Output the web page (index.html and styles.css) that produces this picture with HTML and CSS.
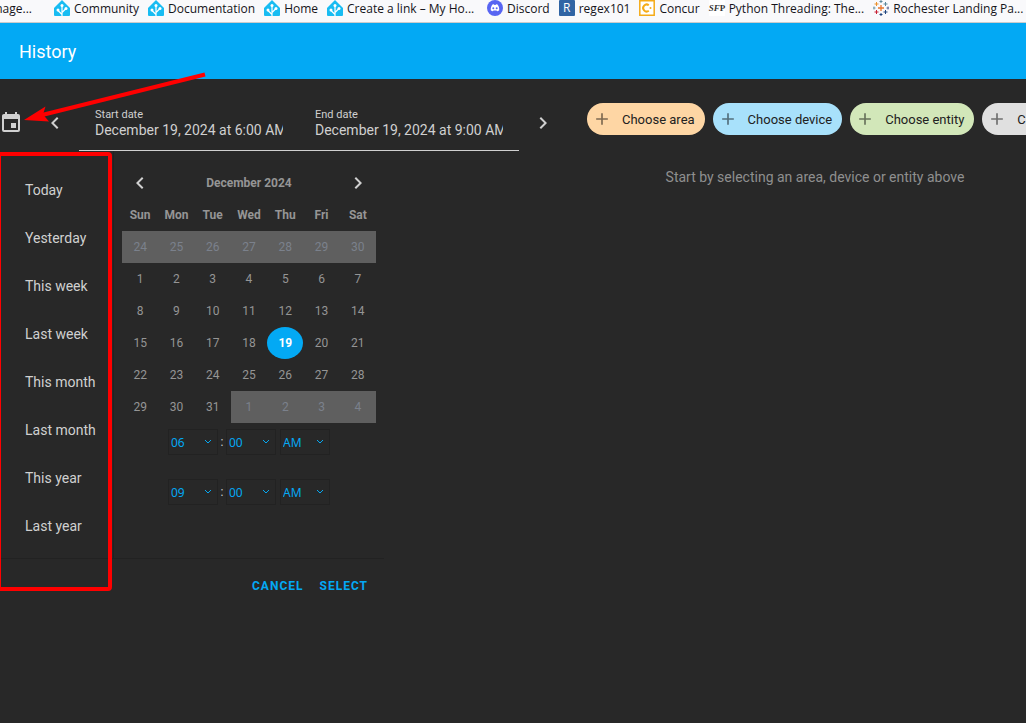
FILE: index.html
```
<!DOCTYPE html>
<html lang="en">
<head>
    <meta charset="UTF-8">
    <meta name="viewport" content="width=device-width, initial-scale=1.0">
    <title>History</title>
    <link rel="stylesheet" href="styles.css">
</head>
<body>
    <!-- shared icons -->
    <svg class="defs" aria-hidden="true">
        <symbol id="ha" viewBox="0 0 16 16">
            <path fill="#18bcf2" d="M8 0 16 8v7a1 1 0 0 1-1 1H1a1 1 0 0 1-1-1V8z"/>
            <path fill="none" stroke="#fff" stroke-width="1.2" d="M8 16V6M8 14.500 4 10.500M8 12.500l4-4"/>
            <circle cx="8" cy="5.500" r="1.500" fill="#fff"/>
            <circle cx="4" cy="10" r="1.500" fill="#fff"/>
            <circle cx="12" cy="8.500" r="1.500" fill="#fff"/>
        </symbol>
        <symbol id="left" viewBox="0 0 24 24"><path d="M15.410 16.580 10.830 12l4.580-4.590L14 6l-6 6 6 6z"/></symbol>
        <symbol id="right" viewBox="0 0 24 24"><path d="M8.590 16.580 13.170 12 8.590 7.410 10 6l6 6-6 6z"/></symbol>
        <symbol id="plus" viewBox="0 0 24 24"><path d="M19 13h-6v6h-2v-6H5v-2h6V5h2v6h6z"/></symbol>
    </svg>

    <nav class="bookmarks">
        <a href="#" class="cut">nage...</a>
        <a href="#"><svg><use href="#ha"/></svg>Community</a>
        <a href="#"><svg><use href="#ha"/></svg>Documentation</a>
        <a href="#"><svg><use href="#ha"/></svg>Home</a>
        <a href="#" class="wide"><svg><use href="#ha"/></svg>Create a link – My Ho...</a>
        <a href="#"><svg viewBox="0 0 16 16"><circle cx="8" cy="8" r="8" fill="#5865f2"/><path fill="#fff" d="M5.500 4.500 7 4.200l.4.700h1.200l.4-.7 1.500.3c1.200 1.600 1.900 3.300 1.700 5.700-.7.600-1.400.9-2.100 1.100l-.6-.9H6.500l-.6.900c-.8-.2-1.500-.6-2.100-1.100-.2-2.200.4-4 1.700-5.700z"/><circle cx="6.300" cy="8.200" r="1" fill="#5865f2"/><circle cx="9.700" cy="8.200" r="1" fill="#5865f2"/></svg>Discord</a>
        <a href="#"><span class="fav regex">R</span>regex101</a>
        <a href="#"><svg viewBox="0 0 16 16"><path fill="#fff" stroke="#f5ab18" stroke-width="1.500" d="M.8.800h14.400v14.400H.8z"/><path fill="none" stroke="#f5ab18" stroke-width="2" d="M9.800 5.200A3.500 3.500 0 1 0 9.800 10.800"/><circle cx="11.500" cy="8" r="1" fill="#f5ab18"/></svg>Concur</a>
        <a href="#"><span class="fav sfp"><i>SF</i>P</span>Python Threading: The...</a>
        <a href="#"><svg viewBox="0 0 16 16" fill="none" stroke-width="1"><path stroke="#e8762d" stroke-width="1.300" d="M8 5v6M5 8h6"/><path stroke="#5b879b" d="M8 0v3M6.500 1.500h3M12.500 2v4M10.500 4h4"/><path stroke="#eb912c" d="M3.500 2v4M1.500 4h4"/><path stroke="#c72035" d="M3.500 10v4M1.500 12h4"/><path stroke="#1f457e" d="M12.500 10v4M10.500 12h4M8 13v3M6.500 14.500h3"/><path stroke="#7199a6" d="M1 6.500v3M0 8h2.500"/><path stroke="#5c6692" d="M15 6.500v3M13.500 8H16"/></svg>Rochester Landing Pa...</a>
    </nav>

    <header class="app_bar">
        <h1>History</h1>
    </header>

    <main class="content">
        <section class="range">
            <div class="range_bar">
                <button type="button" class="icon_btn" aria-label="Select date range"><svg viewBox="1 0 24 24"><path d="M19 19H5V8h14m-3-7v2H8V1H6v2H5c-1.110 0-2 .890-2 2v14a2 2 0 0 0 2 2h14a2 2 0 0 0 2-2V5a2 2 0 0 0-2-2h-1V1m-1 11h-5v5h5z"/></svg></button>
                <button type="button" class="icon_btn prev" aria-label="Previous"><svg><use href="#left"/></svg></button>
                <div class="fields">
                    <div class="field">
                        <label for="start">Start date</label>
                        <input type="text" id="start" value="December 19, 2024 at 6:00 AM" readonly>
                    </div>
                    <div class="field">
                        <label for="end">End date</label>
                        <input type="text" id="end" value="December 19, 2024 at 9:00 AM" readonly>
                    </div>
                </div>
                <button type="button" class="icon_btn next" aria-label="Next"><svg><use href="#right"/></svg></button>
            </div>

            <div class="picker">
                <div class="picker_body">
                    <ul class="presets">
                        <li><button type="button">Today</button></li>
                        <li><button type="button">Yesterday</button></li>
                        <li><button type="button">This week</button></li>
                        <li><button type="button">Last week</button></li>
                        <li><button type="button">This month</button></li>
                        <li><button type="button">Last month</button></li>
                        <li><button type="button">This year</button></li>
                        <li><button type="button">Last year</button></li>
                    </ul>
                    <div class="calendar">
                        <table>
                            <thead>
                                <tr>
                                    <th><button type="button" aria-label="Previous month"><svg><use href="#left"/></svg></button></th>
                                    <th colspan="5">December 2024</th>
                                    <th><button type="button" aria-label="Next month"><svg><use href="#right"/></svg></button></th>
                                </tr>
                                <tr><th>Sun</th><th>Mon</th><th>Tue</th><th>Wed</th><th>Thu</th><th>Fri</th><th>Sat</th></tr>
                            </thead>
                            <tbody>
                                <tr>
                                    <td class="off"><button type="button">24</button></td>
                                    <td class="off"><button type="button">25</button></td>
                                    <td class="off"><button type="button">26</button></td>
                                    <td class="off"><button type="button">27</button></td>
                                    <td class="off"><button type="button">28</button></td>
                                    <td class="off"><button type="button">29</button></td>
                                    <td class="off"><button type="button">30</button></td>
                                </tr>
                                <tr>
                                    <td><button type="button">1</button></td>
                                    <td><button type="button">2</button></td>
                                    <td><button type="button">3</button></td>
                                    <td><button type="button">4</button></td>
                                    <td><button type="button">5</button></td>
                                    <td><button type="button">6</button></td>
                                    <td><button type="button">7</button></td>
                                </tr>
                                <tr>
                                    <td><button type="button">8</button></td>
                                    <td><button type="button">9</button></td>
                                    <td><button type="button">10</button></td>
                                    <td><button type="button">11</button></td>
                                    <td><button type="button">12</button></td>
                                    <td><button type="button">13</button></td>
                                    <td><button type="button">14</button></td>
                                </tr>
                                <tr>
                                    <td><button type="button">15</button></td>
                                    <td><button type="button">16</button></td>
                                    <td><button type="button">17</button></td>
                                    <td><button type="button">18</button></td>
                                    <td class="active"><button type="button">19</button></td>
                                    <td><button type="button">20</button></td>
                                    <td><button type="button">21</button></td>
                                </tr>
                                <tr>
                                    <td><button type="button">22</button></td>
                                    <td><button type="button">23</button></td>
                                    <td><button type="button">24</button></td>
                                    <td><button type="button">25</button></td>
                                    <td><button type="button">26</button></td>
                                    <td><button type="button">27</button></td>
                                    <td><button type="button">28</button></td>
                                </tr>
                                <tr>
                                    <td><button type="button">29</button></td>
                                    <td><button type="button">30</button></td>
                                    <td><button type="button">31</button></td>
                                    <td class="off"><button type="button">1</button></td>
                                    <td class="off"><button type="button">2</button></td>
                                    <td class="off"><button type="button">3</button></td>
                                    <td class="off"><button type="button">4</button></td>
                                </tr>
                            </tbody>
                        </table>
                        <div class="time">
                            <select aria-label="Start hour"><option>06</option></select>
                            <span>:</span>
                            <select aria-label="Start minute"><option>00</option></select>
                            <select class="ampm" aria-label="Start AM or PM"><option>AM</option><option>PM</option></select>
                        </div>
                        <div class="time">
                            <select aria-label="End hour"><option>09</option></select>
                            <span>:</span>
                            <select aria-label="End minute"><option>00</option></select>
                            <select class="ampm" aria-label="End AM or PM"><option>AM</option><option>PM</option></select>
                        </div>
                    </div>
                </div>
                <div class="picker_footer">
                    <button type="button">Cancel</button>
                    <button type="button">Select</button>
                </div>
            </div>
        </section>

        <section class="targets">
            <div class="chips">
                <button type="button" class="chip area"><svg><use href="#plus"/></svg>Choose area</button>
                <button type="button" class="chip device"><svg><use href="#plus"/></svg>Choose device</button>
                <button type="button" class="chip entity"><svg><use href="#plus"/></svg>Choose entity</button>
                <button type="button" class="chip label"><svg><use href="#plus"/></svg>Choose label</button>
            </div>
            <p class="empty">Start by selecting an area, device or entity above</p>
        </section>
    </main>

    <!-- red markup over the page -->
    <svg class="markup" width="220" height="600" viewBox="0 0 220 600" aria-hidden="true">
        <path stroke="#f00" stroke-width="4" d="M205 74.500 40 115.500"/>
        <path fill="#f00" d="M24 120 45.500 106.500 43 114.500 49 121.500z"/>
        <rect x="-1" y="154" width="111" height="435" rx="2" fill="none" stroke="#f00" stroke-width="4"/>
    </svg>
</body>
</html>
```
FILE: styles.css
```
* { box-sizing: border-box; }
body { margin: 0; min-height: 100vh; background-color: #282828; color: #d0d0d0;
    font-family: Roboto, "Liberation Sans", sans-serif; font-size: 14px; overflow: hidden; }
button { margin: 0; padding: 0; border: 0; background: none; color: inherit;
    font: inherit; cursor: pointer; }
svg { display: block; flex: none; }
.defs { position: absolute; width: 0; height: 0; }

/* bookmarks */
.bookmarks { display: flex; gap: 9px; height: 23px; overflow: hidden;
    background-color: #f9f9fb; border-bottom: 1px solid #ccc; }
.bookmarks a { display: flex; gap: 4px; height: 17px; line-height: 17px; flex: none;
    color: #15141a; font-family: "Open Sans", "Noto Sans", sans-serif; font-size: 12px;
    text-decoration: none; white-space: nowrap; }
.bookmarks svg { width: 16px; height: 16px; }
.bookmarks .cut { width: 45px; padding-right: 13px; justify-content: flex-end; }
.bookmarks .wide { width: 151px; }
.fav { width: 16px; height: 16px; line-height: 16px; text-align: center; }
.regex { background-color: #3064a4; color: #fff; border-radius: 1px; }
.sfp { background-color: #fff; color: #333; font-family: "Liberation Serif", serif;
    font-size: 9px; font-weight: bold; }

.app_bar { display: flex; align-items: center; height: 56px; padding: 0 19px;
    background-color: #03a9f4; color: #fff; }
.app_bar h1 { margin: 0; font-size: 18px; font-weight: 400; }

.content { display: flex; }
.range { flex: none; }
.range_bar { display: flex; align-items: center; padding-top: 16px; }
.icon_btn { width: 24px; height: 24px; }
.icon_btn svg, .calendar th svg { width: 24px; height: 24px; fill: currentColor; }
.prev { margin: 0 12px 0 19px; }
.next { margin-left: 12px; }
.fields { display: flex; border-bottom: 1px solid #d0d0d0; }
.field { width: 220px; height: 55px; padding: 13px 16px 0; }
.field label { display: block; font-size: 11px; line-height: 13px; }
.field input { display: block; width: 100%; height: 18px; padding: 0; border: 0;
    background: none; color: inherit; font: inherit; outline: none; }

/* date range picker */
.picker { width: 384px; }
.picker_body { display: flex; border-bottom: 1px solid #222; }
.presets { width: 114px; margin: 0; padding: 15px 0 8px; list-style: none;
    border-right: 1px solid #222; }
.presets button { display: block; width: 100%; height: 48px; padding-left: 25px; text-align: left; }
.calendar { flex: 1; padding: 16px 8px 0 8px; color: #959595; font-size: 12px; }
.calendar table { width: 100%; table-layout: fixed; border-collapse: collapse; }
.calendar th, .calendar td { height: 32px; padding: 0; text-align: center; }
.calendar th svg { margin: 0 auto; }
.calendar th button { display: block; width: 100%; color: #d0d0d0; }
.calendar td button { display: block; width: 100%; height: 32px; }
.calendar .off { background-color: #5f5f5f; color: #7b818c; }
.calendar .active button { background-color: #03a9f4; color: #fff; border-radius: 50%;
    font-weight: bold; }
.time { display: flex; justify-content: center; align-items: center; height: 50px;
    padding-bottom: 12px; color: #d0d0d0; }
.time span { width: 8px; text-align: center; }
.time select { width: 50px; height: 26px; padding: 0 2px; border: 1px solid #222;
    appearance: none; color: #03a9f4; font-family: "Noto Sans", sans-serif; font-size: 12px;
    background: url("data:image/svg+xml,%3Csvg xmlns='http://www.w3.org/2000/svg' width='8' height='6' fill='none' stroke='%2303a9f4'%3E%3Cpath d='M1 1l3 3 3-3'/%3E%3C/svg%3E") no-repeat right 5px center; }
.time .ampm { margin-left: 4px; }
.picker_footer { display: flex; justify-content: flex-end; padding: 9px 8px; }
.picker_footer button { height: 36px; padding: 0 8px; color: #03a9f4; font-size: 12px;
    font-weight: bold; letter-spacing: 1px; text-transform: uppercase; }

/* targets */
.targets { flex: 1; min-width: 0; padding: 24px 0 0 32px; overflow: hidden; }
.chips { display: flex; gap: 8px; }
.chip { display: flex; align-items: center; flex: none; gap: 10px; height: 32px; padding: 0 10px 0 5px;
    border-radius: 16px; color: #212121; font-size: 13px; white-space: nowrap; }
.chip svg { width: 20px; height: 20px; fill: #000; opacity: .5; }
.area { background-color: #fed6a4; }
.device { background-color: #a8e1fb; }
.entity { background-color: #d2e7b9; }
.label { background-color: #e0e0e0; }
.empty { margin: 32px 0 0; padding-left: 17px; line-height: 20px; color: #8f8f8f; text-align: center; }

.markup { position: absolute; top: 0; left: 0; pointer-events: none; }
```
